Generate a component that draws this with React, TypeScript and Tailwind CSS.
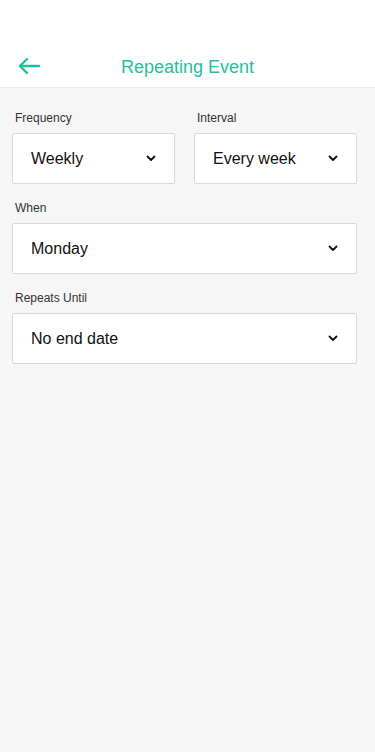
import React from 'react';

const font = { fontFamily: '"Liberation Sans", Arial, sans-serif' };

const Chevron = () => (
  <svg width="10" height="7" viewBox="0 0 10 7" fill="none" stroke="#111" strokeWidth="1.8" strokeLinecap="round" strokeLinejoin="round">
    <path d="M1.5 1.5L5 5l3.5-3.5" />
  </svg>
);

const Select = ({ value }: { value: string }) => (
  <div className="h-[51px] bg-white border border-[#d9d9d9] rounded-[2px] flex items-center justify-between pl-[18px] pr-[18px]">
    <span className="text-[16px] text-[#111]">{value}</span>
    <Chevron />
  </div>
);

const Field = ({ label, value }: { label: string; value: string }) => (
  <div className="flex flex-col flex-1 min-w-0">
    <label className="text-[12px] text-[#333] mb-[7px] pt-[2px] pl-[3px] leading-[15px]">{label}</label>
    <Select value={value} />
  </div>
);

export default function App() {
  return (
    <div className="w-[375px] h-[752px] bg-[#f6f6f6] flex flex-col" style={font}>
      <header className="h-[88px] bg-white border-b border-[#ececec] flex items-end pb-[9px] relative">
        <button className="absolute left-[16px] bottom-[10px] w-[26px] h-[22px] flex items-center justify-center">
          <svg width="24" height="18" viewBox="0 0 24 18" fill="none" stroke="#1fbf9f" strokeWidth="2.4" strokeLinecap="round" strokeLinejoin="round">
            <path d="M22 9H3" />
            <path d="M10 2L3 9l7 7" />
          </svg>
        </button>
        <h1 className="w-full text-center text-[18px] text-[#1fbf9f] leading-[22px]">Repeating Event</h1>
      </header>
      <main className="pl-[12px] pr-[18px] pt-[21px] flex flex-col gap-[15px]">
        <div className="flex gap-[19px]">
          <Field label="Frequency" value="Weekly" />
          <Field label="Interval" value="Every week" />
        </div>
        <Field label="When" value="Monday" />
        <Field label="Repeats Until" value="No end date" />
      </main>
    </div>
  );
}
